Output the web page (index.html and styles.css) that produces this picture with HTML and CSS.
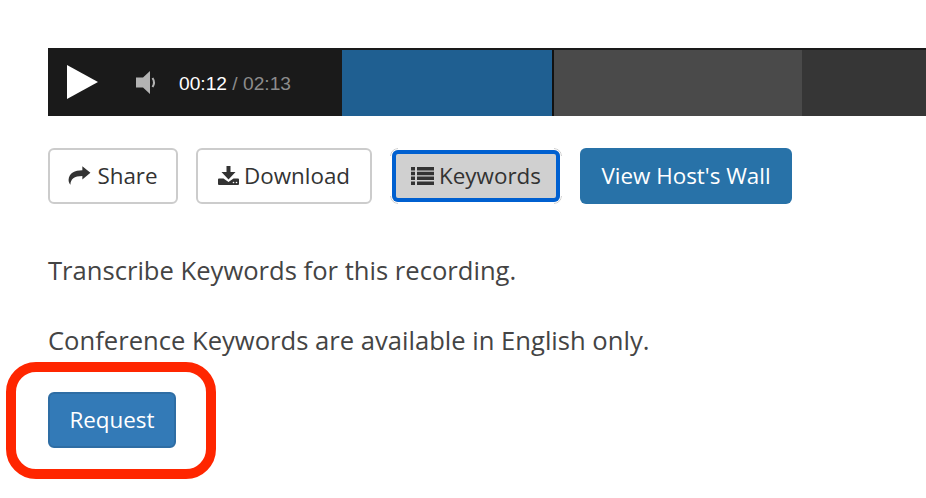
FILE: index.html
```html
<!DOCTYPE html>
<html lang="en">
<head>
<meta charset="utf-8">
<title>Recording</title>
<link rel="stylesheet" href="styles.css">
</head>
<body>
<main class="page">
  <div class="player">
    <div class="controls">
      <svg class="play" viewBox="0 0 31 34" width="31" height="34"><path d="M0 0L31 17L0 34Z" fill="#fff"/></svg>
      <svg class="vol" viewBox="0 0 21 23" width="21" height="23"><path d="M0 6.500H7L14 0V23L7 16.500H0Z" fill="#b3b3b3"/><path d="M16.500 7Q19.500 11.500 16.500 16" stroke="#b3b3b3" stroke-width="2" fill="none"/></svg>
      <div class="time"><span class="now">00:12</span> / 02:13</div>
    </div>
    <div class="track">
      <div class="played"></div>
      <div class="head"></div>
      <div class="buffered"></div>
    </div>
  </div>

  <div class="actions">
    <button class="btn btn-plain share" type="button">
      <svg class="ico ico-share" viewBox="0 0 24 20" width="23" height="19"><path fill="#333" d="M23.500 7.200L15 .2v4.300C7 4.500 1 7.500 .5 14.500c0 2 .7 3.800 2 5.300C2.300 14 6.500 10.500 15 10.500v3.800Z"/></svg>
      Share
    </button>
    <button class="btn btn-plain download" type="button">
      <svg class="ico" viewBox="0 0 21 19" width="21" height="19"><path fill="#333" d="M8.500 0h4v6h5l-7 7.500-7-7.500h5Z"/><path fill="#333" d="M1 12.500h4.500l5 3.500 5-3.500H20a1 1 0 0 1 1 1V18a1 1 0 0 1-1 1H1a1 1 0 0 1-1-1v-4.500a1 1 0 0 1 1-1Z"/><circle cx="15.500" cy="16.500" r=".8" fill="#fff"/><circle cx="18.500" cy="16.500" r=".8" fill="#fff"/></svg>
      Download
    </button>
    <button class="btn keywords" type="button">
      <svg class="ico" viewBox="0 0 23 18" width="23" height="18"><path fill="#333" d="M0 0h4v3.500H0ZM6 0h17v3.500H6ZM0 4.800h4v3.500H0ZM6 4.800h17v3.500H6ZM0 9.600h4v3.500H0ZM6 9.600h17v3.500H6ZM0 14.400h4v3.500H0ZM6 14.400h17v3.500H6Z"/></svg>
      Keywords
    </button>
    <button class="btn btn-host" type="button">View Host's Wall</button>
  </div>

  <p class="line first">Transcribe Keywords for this recording.</p>
  <p class="line second">Conference Keywords are available in English only.</p>

  <div class="request-wrap">
    <button class="btn btn-request" type="button">Request</button>
    <div class="highlight"></div>
  </div>
</main>
</body>
</html>
```
FILE: styles.css
```css
* { box-sizing: border-box; }
html, body { margin: 0; padding: 0; background: #fff; overflow: hidden; }
body { width: 926px; height: 498px; font-family: "Open Sans", "Noto Sans", sans-serif; color: #444; }
.page { padding: 48px 0 0 48px; }

.player { display: flex; height: 68px; background: #1a1a1a; }
.controls { width: 294px; display: flex; align-items: center; flex: none; }
.play { margin-left: 19px; flex: none; }
.vol { margin-left: 38px; flex: none; }
.time { margin-left: 22px; padding-top: 4px; font-family: "Liberation Sans", Arial, sans-serif; font-size: 19.200px; color: #8c8c8c; white-space: nowrap; }
.now { color: #fff; }
.track { flex: 1; display: flex; margin-top: 2px; background: #363636; }
.played { width: 210px; background: #1f5f91; }
.head { width: 2px; background: #111; }
.buffered { width: 248px; background: #4a4a4a; }

.actions { display: flex; gap: 18px; margin-top: 32px; }
.btn { height: 56px; border-radius: 6px; font-family: inherit; font-size: 22.400px; display: flex; align-items: center; justify-content: center; padding: 0 0 1px; white-space: nowrap; }
.btn-plain { background: #fff; border: 2px solid #ccc; color: #333; }
.ico { flex: none; margin-right: 5px; }
.ico-share { margin-right: 6px; }
.share { width: 130px; }
.download { width: 176px; }
.keywords { position: relative; width: 172px; background: #d0d0d0; background-clip: padding-box; border: 2px solid transparent; box-shadow: inset 0 0 0 4px #0060d0; color: #333; border-radius: 8px; }
.keywords::before { content: ""; position: absolute; inset: -2px; border: 1px solid #ccc; border-radius: 8px; -webkit-mask-image: linear-gradient(90deg, #000 8px, transparent 8px, transparent calc(100% - 8px), #000 calc(100% - 8px)), linear-gradient(#000 8px, transparent 8px, transparent calc(100% - 8px), #000 calc(100% - 8px)); mask-image: linear-gradient(90deg, #000 8px, transparent 8px, transparent calc(100% - 8px), #000 calc(100% - 8px)), linear-gradient(#000 8px, transparent 8px, transparent calc(100% - 8px), #000 calc(100% - 8px)); -webkit-mask-composite: source-in; mask-composite: intersect; }
.btn-host { width: 212px; background: #2872a8; border: 0; color: #fff; }

.line { margin: 0; font-size: 25.600px; line-height: 34px; color: #444; }
.first { margin-top: 50px; }
.second { margin-top: 36px; }

.request-wrap { position: relative; margin-top: 34px; width: 128px; }
.btn-request { width: 128px; background: #337ab7; border: 2px solid #2e6da4; color: #fff; }
.highlight { position: absolute; left: -42px; top: -30px; width: 210px; height: 117px; border: 10px solid #ff2600; border-radius: 30px; pointer-events: none; }
```
